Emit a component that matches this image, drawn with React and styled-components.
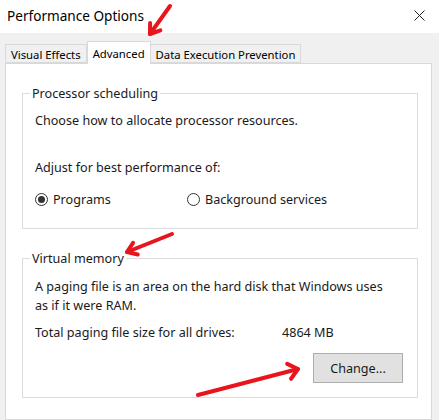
import React from "react";
import styled, { createGlobalStyle } from "styled-components";

const GlobalStyle = createGlobalStyle`
  html, body {
    margin: 0;
    padding: 0;
    background: #f0f0f0;
  }
  * {
    box-sizing: border-box;
  }
`;

const Window = styled.div`
  position: relative;
  width: 439px;
  height: 420px;
  overflow: hidden;
  display: flex;
  flex-direction: column;
  background: #f0f0f0;
  font-family: "Noto Sans", "Open Sans", sans-serif;
  font-size: 12.6px;
  color: #1a1a1a;
`;

const TitleBar = styled.div`
  height: 33px;
  flex-shrink: 0;
  display: flex;
  align-items: center;
  justify-content: space-between;
  padding: 0 14px 2px 7px;
  background: #fff;
`;

const Title = styled.div`
  font-size: 13.6px;
  color: #000;
`;

const Body = styled.div`
  flex: 1;
  display: flex;
  flex-direction: column;
  padding: 8px 7px 0 5px;
`;

const TabStrip = styled.div`
  display: flex;
  align-items: flex-end;
  height: 22px;
`;

const Tab = styled.div`
  position: relative;
  height: ${props => (props.active ? "23px" : "19px")};
  margin-bottom: ${props => (props.active ? "-1px" : "0")};
  padding: 0 ${props => (props.active ? "5px" : "5px")};
  padding-top: ${props => (props.active ? "0" : "1px")};
  display: flex;
  align-items: center;
  background: ${props => (props.active ? "#fff" : "#f0f0f0")};
  border: 1px solid #d9d9d9;
  border-bottom: ${props => (props.active ? "none" : "1px solid #d9d9d9")};
  border-left: ${props => (props.first || props.active ? "1px solid #d9d9d9" : "none")};
  z-index: ${props => (props.active ? 2 : 1)};
  font-size: 11.3px;
  color: #000;
  white-space: nowrap;
`;

const Panel = styled.div`
  flex: 1;
  display: flex;
  flex-direction: column;
  gap: 20px;
  background: #fff;
  border: 1px solid #d9d9d9;
  padding: 20px 13px 0 16px;
`;

const Group = styled.fieldset`
  margin: 0;
  border: 1px solid #dcdcdc;
  padding: 0 14px ${props => props.bottom}px 12px;
  min-width: 0;
`;

const Legend = styled.legend`
  margin-left: -5px;
  padding: 0 2px;
  line-height: 19px;
  color: #1a1a1a;
`;

const Line = styled.div`
  line-height: 19px;
  margin-top: ${props => props.top || 0}px;
  white-space: nowrap;
`;

const RadioRow = styled.div`
  display: grid;
  grid-template-columns: 152px auto;
  margin-top: 13px;
  line-height: 19px;
`;

const RadioOption = styled.label`
  display: flex;
  align-items: center;
  gap: 5px;
`;

const RadioCircle = styled.span`
  width: 13px;
  height: 13px;
  border-radius: 50%;
  border: 1px solid #333;
  display: flex;
  align-items: center;
  justify-content: center;
  background: #fff;

  &::after {
    content: "";
    width: 7px;
    height: 7px;
    border-radius: 50%;
    background: ${props => (props.checked ? "#333" : "transparent")};
  }
`;

const TotalRow = styled.div`
  display: grid;
  grid-template-columns: 247px auto;
  margin-top: 8px;
  line-height: 19px;
`;

const ButtonRow = styled.div`
  display: flex;
  justify-content: flex-end;
  margin-top: 11px;
`;

const Button = styled.button`
  width: 90px;
  height: 30px;
  background: #e1e1e1;
  border: 1px solid #adadad;
  font-family: inherit;
  font-size: 12.6px;
  color: #1a1a1a;
  padding: 0;
`;

const Overlay = styled.svg`
  position: absolute;
  left: 0;
  top: 0;
  pointer-events: none;
`;

const CloseIcon = () => (
  <svg width="11" height="11" viewBox="0 0 11 11">
    <path d="M0.5 0.5 L10.5 10.5 M10.5 0.5 L0.5 10.5" stroke="#222" strokeWidth="1" />
  </svg>
);

const Arrow = ({ from, to, head = 11, spread = 35 }) => {
  const dx = from[0] - to[0];
  const dy = from[1] - to[1];
  const len = Math.hypot(dx, dy);
  const ux = dx / len;
  const uy = dy / len;
  const a = (spread * Math.PI) / 180;
  const rot = s => [
    to[0] + head * (ux * Math.cos(s * a) - uy * Math.sin(s * a)),
    to[1] + head * (ux * Math.sin(s * a) + uy * Math.cos(s * a)),
  ];
  const p1 = rot(1);
  const p2 = rot(-1);
  return (
    <g stroke="#e8161c" strokeWidth="4" strokeLinecap="round" strokeLinejoin="round" fill="none">
      <line x1={from[0]} y1={from[1]} x2={to[0]} y2={to[1]} />
      <polyline points={`${p1[0]},${p1[1]} ${to[0]},${to[1]} ${p2[0]},${p2[1]}`} />
    </g>
  );
};

const tabs = ["Visual Effects", "Advanced", "Data Execution Prevention"];

export default function App() {
  return (
    <Window>
      <GlobalStyle />
      <TitleBar>
        <Title>Performance Options</Title>
        <CloseIcon />
      </TitleBar>
      <Body>
        <TabStrip>
          {tabs.map((t, i) => (
            <Tab key={t} first={i === 0} active={t === "Advanced"}>
              {t}
            </Tab>
          ))}
        </TabStrip>
        <Panel>
          <Group bottom={19}>
            <Legend>Processor scheduling</Legend>
            <Line top={8}>Choose how to allocate processor resources.</Line>
            <Line top={28}>Adjust for best performance of:</Line>
            <RadioRow>
              <RadioOption>
                <RadioCircle checked />
                Programs
              </RadioOption>
              <RadioOption>
                <RadioCircle />
                Background services
              </RadioOption>
            </RadioRow>
          </Group>
          <Group bottom={14}>
            <Legend>Virtual memory</Legend>
            <Line top={9}>A paging file is an area on the hard disk that Windows uses</Line>
            <Line>as if it were RAM.</Line>
            <TotalRow>
              <span>Total paging file size for all drives:</span>
              <span>4864 MB</span>
            </TotalRow>
            <ButtonRow>
              <Button>Change...</Button>
            </ButtonRow>
          </Group>
        </Panel>
      </Body>
      <Overlay width="439" height="420">
        <Arrow from={[170, 6]} to={[150, 34]} />
        <Arrow from={[172, 234]} to={[127, 252]} />
        <Arrow from={[198, 395]} to={[298, 369]} spread={40} head={12} />
      </Overlay>
    </Window>
  );
}
